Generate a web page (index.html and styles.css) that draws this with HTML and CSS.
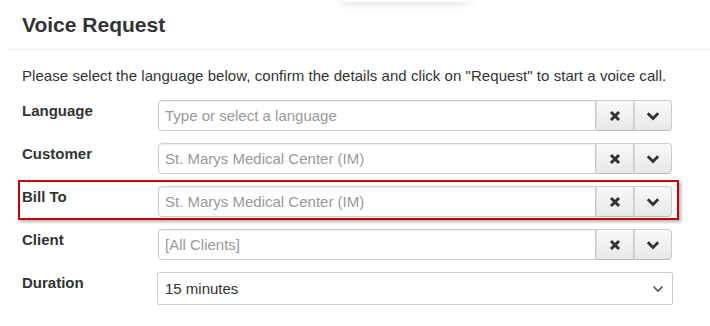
FILE: index.html
```html
<!DOCTYPE html>
<html>
<head>
<meta charset="utf-8">
<link rel="stylesheet" href="styles.css">
</head>
<body>
<div class="modal">
  <div class="topshadow"></div>
  <div class="header">
    <h4 class="title">Voice Request</h4>
  </div>
  <div class="body">
    <p class="intro">Please select the language below, confirm the details and click on "Request" to start a voice call.</p>
    <div class="row">
      <label class="label">Language</label>
      <div class="combo">
        <div class="field placeholder">Type or select a language</div>
        <div class="btn"><svg width="12" height="12" viewBox="0 0 12 12"><path d="M2 2L10 10M10 2L2 10" stroke="#333" stroke-width="3"/></svg></div>
        <div class="btn last"><svg width="14" height="10" viewBox="0 0 14 10"><path d="M1.8 2.3L7 7.5L12.2 2.3" fill="none" stroke="#333" stroke-width="2.8"/></svg></div>
      </div>
    </div>
    <div class="row">
      <label class="label">Customer</label>
      <div class="combo">
        <div class="field placeholder">St. Marys Medical Center (IM)</div>
        <div class="btn"><svg width="12" height="12" viewBox="0 0 12 12"><path d="M2 2L10 10M10 2L2 10" stroke="#333" stroke-width="3"/></svg></div>
        <div class="btn last"><svg width="14" height="10" viewBox="0 0 14 10"><path d="M1.8 2.3L7 7.5L12.2 2.3" fill="none" stroke="#333" stroke-width="2.8"/></svg></div>
      </div>
    </div>
    <div class="row highlight">
      <label class="label">Bill To</label>
      <div class="combo">
        <div class="field placeholder">St. Marys Medical Center (IM)</div>
        <div class="btn"><svg width="12" height="12" viewBox="0 0 12 12"><path d="M2 2L10 10M10 2L2 10" stroke="#333" stroke-width="3"/></svg></div>
        <div class="btn last"><svg width="14" height="10" viewBox="0 0 14 10"><path d="M1.8 2.3L7 7.5L12.2 2.3" fill="none" stroke="#333" stroke-width="2.8"/></svg></div>
      </div>
    </div>
    <div class="row">
      <label class="label">Client</label>
      <div class="combo">
        <div class="field placeholder">[All Clients]</div>
        <div class="btn"><svg width="12" height="12" viewBox="0 0 12 12"><path d="M2 2L10 10M10 2L2 10" stroke="#333" stroke-width="3"/></svg></div>
        <div class="btn last"><svg width="14" height="10" viewBox="0 0 14 10"><path d="M1.8 2.3L7 7.5L12.2 2.3" fill="none" stroke="#333" stroke-width="2.8"/></svg></div>
      </div>
    </div>
    <div class="row">
      <label class="label">Duration</label>
      <div class="select">
        <span>15 minutes</span>
        <svg width="12" height="8" viewBox="0 0 12 8"><path d="M1.5 1.5L6 6L10.5 1.5" fill="none" stroke="#555" stroke-width="1.6"/></svg>
      </div>
    </div>
  </div>
</div>
</body>
</html>
```

FILE: styles.css
```css
html, body {
  margin: 0;
  padding: 0;
  background: #fff;
}
body {
  font-family: "Liberation Sans", Arial, sans-serif;
  color: #333;
  width: 710px;
  height: 326px;
  overflow: hidden;
}
.modal {
  position: relative;
}
.topshadow {
  position: absolute;
  left: 340px;
  top: -10px;
  width: 130px;
  height: 12px;
  border-radius: 6px;
  box-shadow: 0 2px 8px rgba(0,0,0,0.12);
  background: #fff;
}
.header {
  margin-left: 8px;
  padding: 13px 0 0 14px;
  height: 36px;
  border-bottom: 1px solid #eeeeee;
}
.title {
  margin: 0;
  font-size: 21px;
  font-weight: bold;
  color: #333;
  line-height: 24px;
}
.body {
  padding: 0 0 0 22px;
}
.intro {
  margin: 0;
  padding-top: 17px;
  font-size: 15px;
  line-height: 17px;
  height: 33px;
  color: #333;
  letter-spacing: 0.05px;
}
.row {
  display: flex;
  align-items: flex-start;
  height: 43px;
  position: relative;
}
.label {
  width: 136px;
  flex: none;
  font-size: 15px;
  font-weight: bold;
  line-height: 17px;
  padding-top: 2px;
  color: #333;
}
.combo {
  display: flex;
  height: 31px;
}
.field {
  width: 430px;
  height: 29px;
  border: 1px solid #ccc;
  border-radius: 4px 0 0 4px;
  padding-left: 6px;
  display: flex;
  align-items: center;
  font-size: 15px;
  box-shadow: inset 0 1px 1px rgba(0,0,0,0.075);
}
.placeholder {
  color: #999;
}
.btn {
  width: 36px;
  height: 29px;
  border: 1px solid #ccc;
  border-left: 1px solid #ddd;
  background: linear-gradient(#f9f9f9, #e8e8e8);
  display: flex;
  align-items: center;
  justify-content: center;
  border-bottom-color: #b8b8b8;
}
.btn:first-of-type {
  margin-left: 1px;
}
.btn.last {
  border-radius: 0 4px 4px 0;
  width: 36px;
  border-left: 1px solid #d6d6d6;
}
.select {
  width: 499px;
  height: 31px;
  border: 1px solid #ccc;
  border-radius: 2px;
  margin-left: -1px;
  padding: 0 8px 0 7px;
  display: flex;
  align-items: center;
  justify-content: space-between;
  font-size: 15px;
  color: #333;
}
.highlight::after {
  content: "";
  position: absolute;
  left: -4px;
  top: -6px;
  width: 657px;
  height: 36px;
  border: 2px solid #cc0000;
  box-shadow: 2px 2px 3px rgba(0,0,0,0.3);
  pointer-events: none;
}
```
